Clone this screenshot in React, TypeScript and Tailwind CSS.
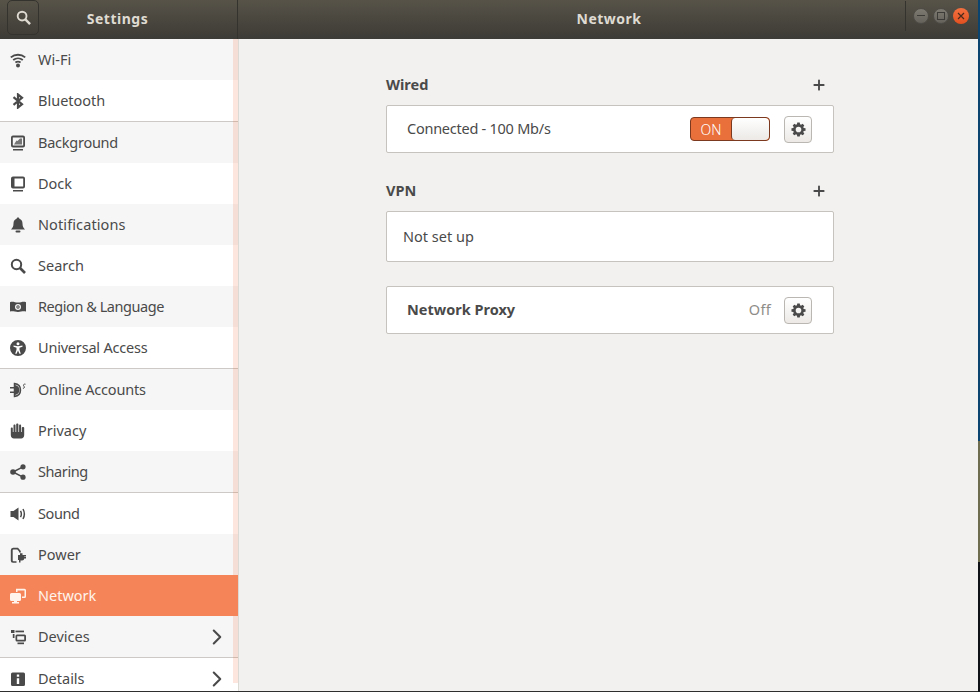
import { ReactNode } from "react"
import { ChevronRight, Plus } from "lucide-react"

const ic = { viewBox: "0 0 16 16", width: 16, height: 16, fill: "currentColor" }

function Wifi() {
  return (
    <svg {...ic} fill="none" stroke="currentColor" strokeWidth="1.9">
      <path d="M.8 5.4C5 1.800 11 1.800 15.200 5.400" />
      <path d="M3.200 8C6 5.800 10 5.800 12.800 8" />
      <path d="M5.400 10.500C7 9.400 9 9.400 10.600 10.500" />
      <circle cx="8" cy="13.500" r="2" fill="currentColor" stroke="none" />
    </svg>
  )
}

function BluetoothIcon() {
  return (
    <svg {...ic} fill="none" stroke="currentColor" strokeWidth="2.2">
      <path d="M3.500 4.200 12 11.200 8 14.500V1.500l4 3.300-8.500 7" />
    </svg>
  )
}

function BackgroundIcon() {
  return (
    <svg {...ic}>
      <path fillRule="evenodd" d="M3 .5h10a2 2 0 0 1 2 2v8a2 2 0 0 1-2 2H3a2 2 0 0 1-2-2v-8a2 2 0 0 1 2-2Zm-.2 2v8h10.400v-8H2.800Z" />
      <path d="M4 9.500h8V3.500h-2L7.500 6 6.500 5.500 4 9.500Z" opacity=".75" />
      <rect x="3" y="14" width="10" height="1.500" />
    </svg>
  )
}

function DockIcon() {
  return (
    <svg {...ic}>
      <path fillRule="evenodd" d="M3 .5h10a2 2 0 0 1 2 2v8a2 2 0 0 1-2 2H3a2 2 0 0 1-2-2v-8a2 2 0 0 1 2-2Zm1.500 2v8h8.700v-8H4.500Z" />
      <rect x="3" y="14" width="10" height="1.500" />
    </svg>
  )
}

function Bell() {
  return (
    <svg {...ic}>
      <path d="M8 .5c.8 0 1.300.5 1.400 1.200C11.500 2.300 12.500 4 12.500 6.500c0 2.800.9 4.500 2.500 6H1c1.600-1.500 2.500-3.200 2.500-6 0-2.500 1-4.200 3.100-4.800C6.700 1 7.200.5 8 .5Z" />
      <rect x="5.500" y="13.500" width="5" height="2" rx="1" />
    </svg>
  )
}

function SearchIcon({ size = 16 }: { size?: number }) {
  return (
    <svg viewBox="0 0 16 16" width={size} height={size} fill="none" stroke="currentColor">
      <circle cx="6.500" cy="6.500" r="4.700" strokeWidth="2" />
      <path d="M10 10l5 5" strokeWidth="2.600" />
    </svg>
  )
}

function Flag() {
  return (
    <svg {...ic}>
      <path fillRule="evenodd" d="M0 3.200c3-1 5 .4 8 .4s5-1.400 8-.4v9.300c-3-.8-5 .4-8 .4s-5-1.200-8-.4V3.200Zm8 1.800a3 3 0 1 0 0 6 3 3 0 0 0 0-6Zm0 1.300a1.700 1.700 0 1 1 0 3.400 1.700 1.700 0 0 1 0-3.400Zm0 1a.7.7 0 1 0 0 1.400.7.7 0 0 0 0-1.400Z" />
    </svg>
  )
}

function Universal() {
  return (
    <svg {...ic}>
      <path fillRule="evenodd" d="M8 0a8 8 0 1 1 0 16A8 8 0 0 1 8 0Zm0 2.300a1.500 1.500 0 1 0 0 3 1.500 1.500 0 0 0 0-3ZM3.500 5.500v1.300l3 .9v2l-1.300 4h1.400L8 10.500l1.400 3.200h1.400l-1.300-4v-2l3-.9V5.500L8 6.300 3.500 5.500Z" />
    </svg>
  )
}

function Online() {
  return (
    <svg {...ic}>
      <path d="M4.500 1.500C8 2 10.500 4.500 10.500 8s-2.500 6-6 6.500v-13Z" fill="none" stroke="currentColor" strokeWidth="1.500" />
      <path d="M5 3c3 .6 4.500 2.500 4.500 5S8 12.400 5 13V3Z" />
      <path d="M0 5h4.500v1.400H0zM0 9.500h4.500v1.400H0z" />
      <path d="M15.500 2.200c-1.800-.5-2.600 1-1.600 2 .9.900.7 2.300-1 2" fill="none" stroke="currentColor" strokeWidth="1" />
    </svg>
  )
}

function Hand() {
  return (
    <svg {...ic}>
      <path d="M.8 5.500c0-1.200 2-1.200 2 0V9h.7V2.500c0-1.200 2-1.200 2 0V9h.7V1.500c0-1.200 2.200-1.200 2.200 0V9h.7V2.500c0-1.200 2-1.200 2 0V9h.7V5c0-1.200 2.400-1.200 2.400 0v7c0 2-1.300 3.500-3 3.500H4c-1.900 0-3.200-1.500-3.200-3.500V5.500Z" />
    </svg>
  )
}

function Share() {
  return (
    <svg {...ic}>
      <circle cx="3" cy="8" r="2.800" />
      <circle cx="13" cy="2.800" r="2.600" />
      <circle cx="13" cy="13.200" r="2.600" />
      <path d="M3 8 13 2.800M3 8l10 5.200" stroke="currentColor" strokeWidth="1.500" />
    </svg>
  )
}

function Sound() {
  return (
    <svg {...ic}>
      <path d="M.5 5h3L8.500 1.500v13L3.500 11h-3V5Z" />
      <path d="M10.500 4.800c1.100 2 1.100 4.400 0 6.400M13 3c1.700 3.100 1.700 6.900 0 10" fill="none" stroke="currentColor" strokeWidth="1.500" />
    </svg>
  )
}

function Power() {
  return (
    <svg {...ic}>
      <path d="M3.500.8H8L10.800 4v1.500H9V4.600L7.300 2.500H3.500a.8.800 0 0 0-.8.800V13.500a.8.800 0 0 0 .8.800h3v1.500H3A2.200 2.200 0 0 1 .8 13.500V3.300A2.500 2.500 0 0 1 3.500.8Z" />
      <path d="M8 8h2V6.300h2.500V8h3.500v1.500h-1.800V10H16v1.500h-1.800c0 1.200-1 2-2 2h-1.700V15.500H9V13H8V8Z" />
    </svg>
  )
}

function NetworkIcon() {
  return (
    <svg {...ic}>
      <path d="M1.500 5h8A1.500 1.500 0 0 1 11 6.500v5A1.500 1.500 0 0 1 9.500 13H7v1h2v1.500H2V14h2v-1H1.500A1.500 1.500 0 0 1 0 11.500v-5A1.500 1.500 0 0 1 1.500 5Z" />
      <path d="M6 .8h8.500A1.500 1.500 0 0 1 16 2.300v6.200A1.500 1.500 0 0 1 14.500 10H12V8.500h2.500v-6H7.500V4H6V.8Z" />
    </svg>
  )
}

function Devices() {
  return (
    <svg {...ic}>
      <rect x="1" y="1" width="3.500" height="3" />
      <rect x="5.500" y="1.600" width="8.500" height="1.700" />
      <rect x="2.800" y="5" width="1.700" height="4" />
      <path fillRule="evenodd" d="M7 5.500h7.500A1.500 1.500 0 0 1 16 7v4a1.500 1.500 0 0 1-1.500 1.500H7A1.500 1.500 0 0 1 5.500 11V7A1.500 1.500 0 0 1 7 5.500ZM7.200 7.200v3.600h7V7.200h-7Z" />
      <rect x="7.500" y="13.500" width="6.500" height="1.700" />
    </svg>
  )
}

function Info() {
  return (
    <svg {...ic}>
      <path fillRule="evenodd" d="M2.500 1.500h11A1.500 1.500 0 0 1 15 3v10.500a1.500 1.500 0 0 1-1.500 1.500h-11A1.500 1.500 0 0 1 1 13.500V3a1.500 1.500 0 0 1 1.500-1.500ZM6.800 3.500v2.200h2.400V3.500H6.800Zm0 3.700V13h2.400V7.200H6.800Z" />
    </svg>
  )
}

function Gear() {
  return (
    <svg viewBox="0 0 16 16" width="15" height="15" fill="currentColor">
      <path fillRule="evenodd" d="M6.700.5h2.600l.4 2 1 .4 1.700-1.100 1.800 1.800-1.100 1.700.4 1 2 .4v2.600l-2 .4-.4 1 1.100 1.700-1.800 1.800-1.700-1.100-1 .4-.4 2H6.700l-.4-2-1-.4-1.700 1.100-1.800-1.800 1.100-1.700-.4-1-2-.4V6.700l2-.4.4-1-1.100-1.700 1.800-1.800 1.700 1.100 1-.4.4-2ZM8 5a3 3 0 1 0 0 6 3 3 0 0 0 0-6Z" />
    </svg>
  )
}

type Item = { label: string; icon: ReactNode; track?: string; arrow?: boolean; sep?: boolean; active?: boolean }

const items: Item[] = [
  { label: "Wi-Fi", icon: <Wifi /> },
  { label: "Bluetooth", icon: <BluetoothIcon />, sep: true },
  { label: "Background", icon: <BackgroundIcon />, track: "tracking-[-0.25px]" },
  { label: "Dock", icon: <DockIcon /> },
  { label: "Notifications", icon: <Bell />, track: "tracking-[0.1px]" },
  { label: "Search", icon: <SearchIcon /> },
  { label: "Region & Language", icon: <Flag />, track: "tracking-[-0.45px]" },
  { label: "Universal Access", icon: <Universal />, track: "tracking-[-0.2px]", sep: true },
  { label: "Online Accounts", icon: <Online />, track: "tracking-[-0.2px]" },
  { label: "Privacy", icon: <Hand /> },
  { label: "Sharing", icon: <Share />, track: "tracking-[-0.4px]", sep: true },
  { label: "Sound", icon: <Sound />, track: "tracking-[-0.4px]" },
  { label: "Power", icon: <Power /> },
  { label: "Network", icon: <NetworkIcon />, active: true },
  { label: "Devices", icon: <Devices />, arrow: true, sep: true },
  { label: "Details", icon: <Info />, arrow: true },
]

function SideRow({ item, striped }: { item: Item; striped: boolean }) {
  const bg = item.active
    ? "relative z-10 bg-[#f58558] text-[#fff3ec]"
    : striped
      ? "bg-[#f6f6f6] text-[#4a4a4a]"
      : "bg-white text-[#4a4a4a]"
  return (
    <div className={`flex h-[41px] shrink-0 items-center ${bg}`}>
      <div className="ml-[10px] flex w-[16px] items-center justify-center">{item.icon}</div>
      <span className={`ml-[12px] flex-1 text-[14.5px] ${item.track ?? ""}`}>{item.label}</span>
      {item.arrow && <ChevronRight size={26} strokeWidth={1.9} className="mr-[8px]" />}
    </div>
  )
}

function Sidebar() {
  return (
    <div className="relative flex w-[238px] shrink-0 flex-col overflow-hidden bg-white">
      {items.map((item, i) => (
        <div key={item.label} className="shrink-0">
          <SideRow item={item} striped={i % 2 === 0} />
          {item.sep && <div className="h-px bg-[#cdc9c6]" />}
        </div>
      ))}
      <div className="absolute top-0 right-0 h-[644px] w-[5px] bg-[#e95420]/15" />
    </div>
  )
}

function TitleBar() {
  return (
    <div className="flex h-[39px] shrink-0 bg-gradient-to-b from-[#575349] to-[#3d3b35] text-[#dfdbd2]">
      <div className="flex w-[238px] shrink-0 items-center border-r border-[#35332e]">
        <div className="ml-[7px] flex h-[35px] w-[32px] shrink-0 items-center justify-center self-start rounded-[5px] border border-[#35332e]">
          <SearchIcon size={15} />
        </div>
        <div className="mb-[3px] -ml-[39px] flex-1 pr-[2px] text-center text-[14px] font-bold tracking-[0.5px]">Settings</div>
      </div>
      <div className="relative flex flex-1 items-center justify-center">
        <span className="mb-[3px] ml-[2px] text-[14px] font-bold tracking-[0.5px]">Network</span>
        <div className="absolute top-0 right-[9px] flex h-[31px] items-center gap-[4px]">
          <div className="mr-[3px] h-[30px] w-px bg-[#35332e]" />
          <div className="flex h-4 w-4 items-center justify-center rounded-full border border-[#4e4c46] bg-gradient-to-b from-[#7d7a72] to-[#65625b]">
            <div className="h-[1.5px] w-2 bg-[#3c3b37]" />
          </div>
          <div className="flex h-4 w-4 items-center justify-center rounded-full border border-[#4e4c46] bg-gradient-to-b from-[#7d7a72] to-[#65625b]">
            <div className="h-2 w-2 border border-[#3c3b37]" />
          </div>
          <div className="flex h-4 w-4 items-center justify-center rounded-full bg-gradient-to-b from-[#f4713f] to-[#e2501f] text-[#4b2a1c]">
            <svg viewBox="0 0 8 8" width="8" height="8" fill="none" stroke="currentColor" strokeWidth="1.200">
              <path d="M1 1l6 6M7 1 1 7" />
            </svg>
          </div>
        </div>
      </div>
    </div>
  )
}

function GearButton() {
  return (
    <div className="flex h-[27px] w-[28px] items-center justify-center rounded-[4px] border border-[#bab6b1] bg-gradient-to-b from-white to-[#ece9e6] text-[#4a4a4a]">
      <Gear />
    </div>
  )
}

function Card({ children, h }: { children: ReactNode; h: string }) {
  return <div className={`flex items-center rounded-[2px] border border-[#c6c2bd] bg-white ${h}`}>{children}</div>
}

function SectionHead({ title }: { title: string }) {
  return (
    <div className="flex h-[22px] items-center justify-between pr-[7px] text-[#4a4a4a]">
      <span className="text-[14.5px] font-bold">{title}</span>
      <Plus size={16} strokeWidth={2.8} />
    </div>
  )
}

export default function App() {
  return (
    <div className="flex h-[692px] w-[980px] overflow-hidden bg-[#2e2e2e] font-['Noto_Sans',sans-serif]">
      <div className="flex h-[691px] w-[978px] shrink-0 flex-col">
        <TitleBar />
        <div className="flex min-h-0 flex-1">
          <Sidebar />
          <div className="flex-1 border-l border-[#dcdad5] bg-[#f2f1ef] pt-[35px] pl-[147px]">
            <div className="flex w-[448px] flex-col">
              <SectionHead title="Wired" />
              <div className="mt-[9px]">
                <Card h="h-[48px]">
                  <span className="ml-[20px] flex-1 text-[14.5px] tracking-[-0.25px] text-[#4a4a4a]">Connected - 100 Mb/s</span>
                  <div className="flex h-[24px] w-[80px] overflow-hidden rounded-[4px] border border-[#7b3a20] bg-[#e9703a]">
                    <div className="flex w-[40px] items-center justify-center text-[14px] font-light text-white">ON</div>
                    <div className="flex-1 rounded-[4px] border-l border-[#7b3a20] bg-gradient-to-b from-white to-[#ece9e6]" />
                  </div>
                  <div className="mr-[21px] ml-[14px]"><GearButton /></div>
                </Card>
              </div>
              <div className="mt-[27px]"><SectionHead title="VPN" /></div>
              <div className="mt-[9px]">
                <Card h="h-[51px]">
                  <span className="ml-[16px] text-[14.5px] text-[#4a4a4a]">Not set up</span>
                </Card>
              </div>
              <div className="mt-[24px]">
                <Card h="h-[48px]">
                  <span className="ml-[20px] flex-1 text-[14.5px] font-bold text-[#4a4a4a]">Network Proxy</span>
                  <span className="text-[14.5px] tracking-[0.3px] text-[#8f8d89]">Off</span>
                  <div className="mr-[21px] ml-[13px]"><GearButton /></div>
                </Card>
              </div>
            </div>
          </div>
        </div>
      </div>
      <div className="flex h-full flex-1 flex-col">
        <div className="h-[441px] bg-[#0c4470]" />
        <div className="h-[121px] bg-[#6f6d50]" />
        <div className="flex-1 bg-[#0f1216]" />
      </div>
    </div>
  )
}
